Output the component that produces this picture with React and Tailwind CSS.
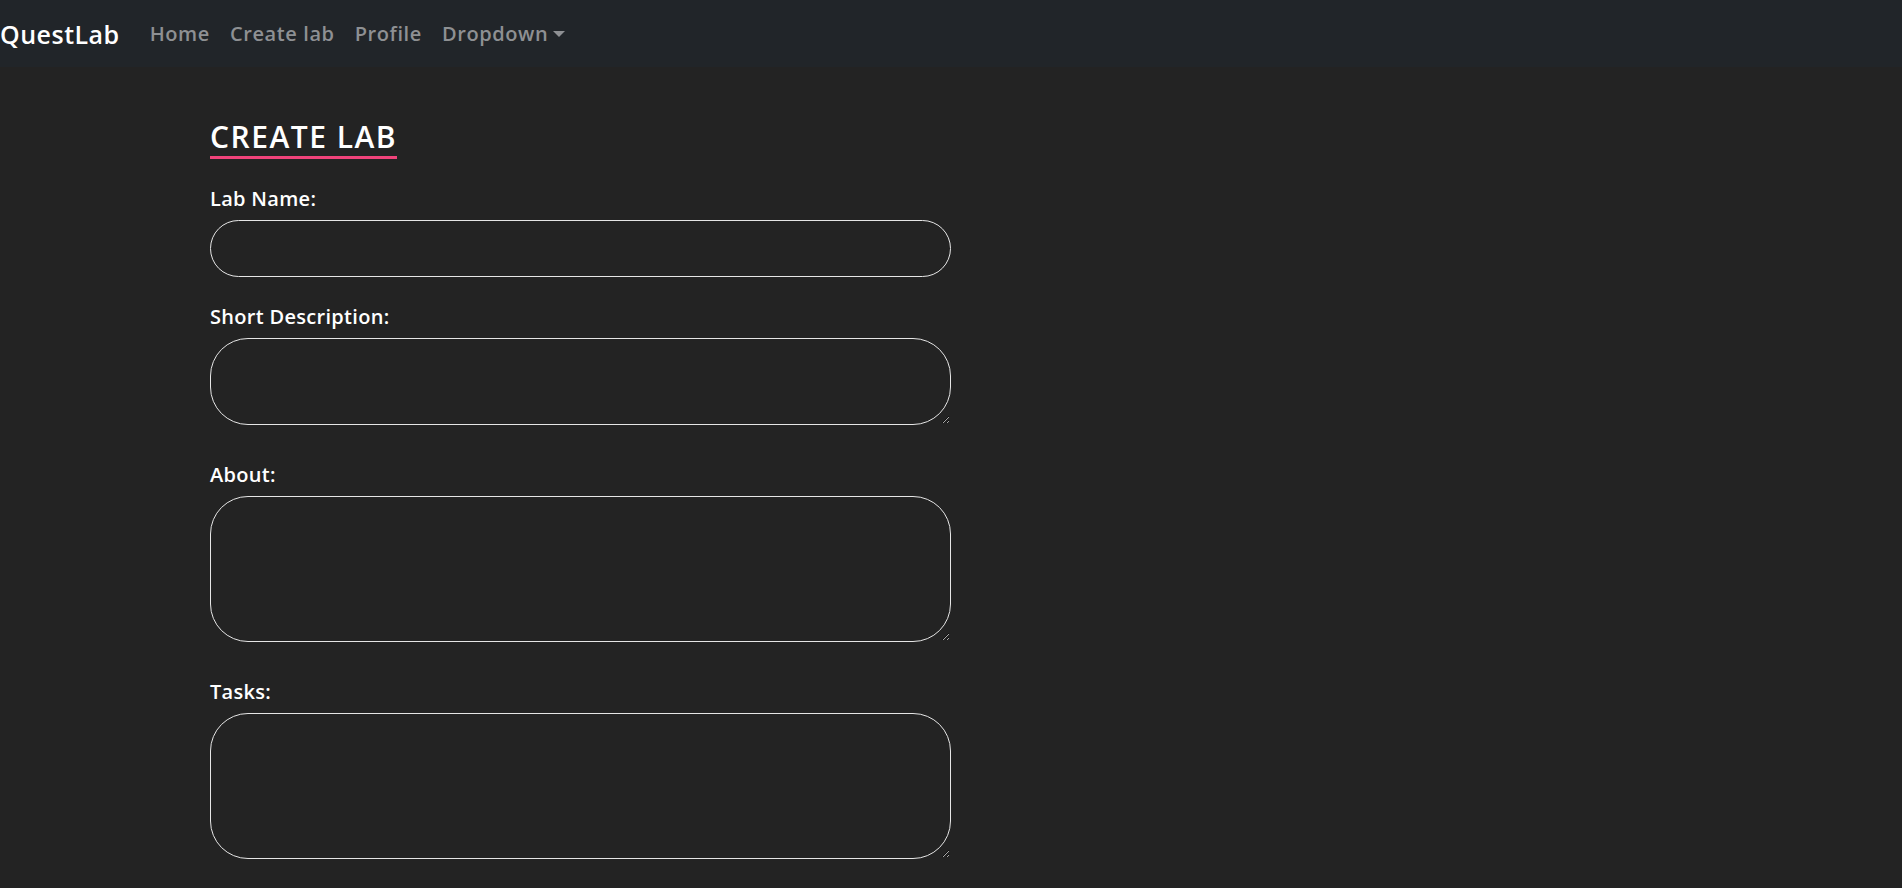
import { useState } from 'react';

const navLinks = ['Home', 'Create lab', 'Profile'];

function Field({ label, children }) {
  return (
    <div>
      <label className="block text-[20px] leading-[30px] font-semibold tracking-[0.3px] text-white mb-[6.5px]">
        {label}
      </label>
      {children}
    </div>
  );
}

export default function App() {
  const [form, setForm] = useState({ name: '', short: '', about: '', tasks: '' });

  const update = (key) => (e) => setForm({ ...form, [key]: e.target.value });

  return (
    <div className="min-h-screen bg-[#232323] font-['Open_Sans',sans-serif]">
      <nav className="h-[67px] bg-[#212529] flex items-center">
        <a href="#" className="text-[25px] leading-[36px] font-semibold text-white mr-[20px] tracking-[0.5px]">
          QuestLab
        </a>
        <ul className="flex items-center">
          {navLinks.map((link) => (
            <li key={link}>
              <a href="#" className="block px-[10px] text-[20px] leading-[30px] font-semibold tracking-[0.6px] text-[#8e9093]">
                {link}
              </a>
            </li>
          ))}
          <li>
            <a href="#" className="flex items-center px-[10px] text-[20px] leading-[30px] font-semibold tracking-[0.6px] text-[#8e9093]">
              Dropdown
              <span className="ml-[5px] w-0 h-0 border-t-[6px] border-t-[#8e9093] border-x-[6px] border-x-transparent"></span>
            </a>
          </li>
        </ul>
      </nav>

      <main className="pl-[210px] pt-[52px]">
        <h2 className="inline-block text-[30px] leading-[36px] font-semibold text-white tracking-[1.5px] pb-[1px] border-b-[3px] border-[#f0437a] mb-[24.5px]">
          CREATE LAB
        </h2>

        <form className="w-[741px]" onSubmit={(e) => e.preventDefault()}>
          <div className="mb-[24.5px]">
            <Field label="Lab Name:">
              <input
                type="text"
                value={form.name}
                onChange={update('name')}
                className="block w-full h-[57px] rounded-full border border-[#e6e6e6] bg-transparent px-6 text-white text-[20px] outline-none"
              />
            </Field>
          </div>

          <div className="mb-[34.5px]">
            <Field label="Short Description:">
              <textarea
                value={form.short}
                onChange={update('short')}
                className="block w-full h-[87px] rounded-[38px] border border-[#e6e6e6] bg-transparent px-6 py-3 text-white text-[20px] outline-none resize-y"
              />
            </Field>
          </div>

          <div className="mb-[34.5px]">
            <Field label="About:">
              <textarea
                value={form.about}
                onChange={update('about')}
                className="block w-full h-[146px] rounded-[38px] border border-[#e6e6e6] bg-transparent px-6 py-3 text-white text-[20px] outline-none resize-y"
              />
            </Field>
          </div>

          <div className="mb-[34.5px]">
            <Field label="Tasks:">
              <textarea
                value={form.tasks}
                onChange={update('tasks')}
                className="block w-full h-[146px] rounded-[38px] border border-[#e6e6e6] bg-transparent px-6 py-3 text-white text-[20px] outline-none resize-y"
              />
            </Field>
          </div>
        </form>
      </main>
    </div>
  );
}
